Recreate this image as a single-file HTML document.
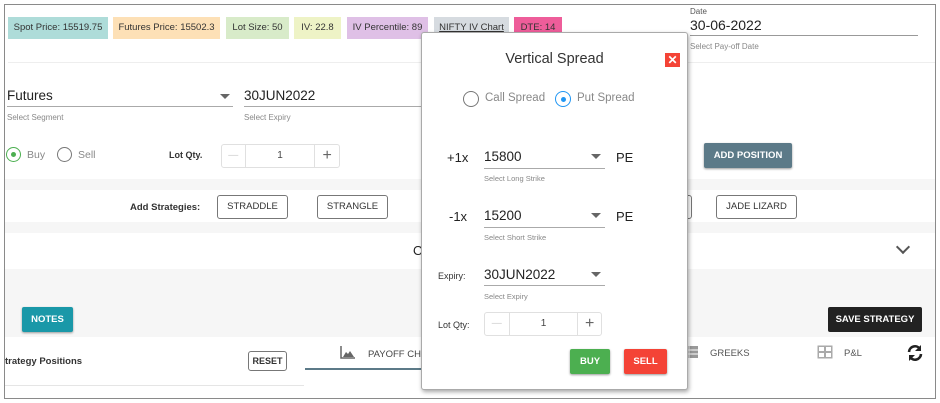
<!DOCTYPE html>
<html><head><meta charset="utf-8"><style>
*{box-sizing:border-box;margin:0;padding:0}
body{width:940px;height:403px;background:#fff;font-family:"Liberation Sans",Arial,sans-serif;position:relative;overflow:hidden;color:#222}
.a{position:absolute}
.frame{left:4px;top:4px;width:932px;height:395px;border:1px solid #8a8a8a}
.chip{position:absolute;top:17px;height:22px;font-size:9.5px;line-height:22px;text-align:center;color:#333}
.lbl{font-size:8px;color:#888}
.btn{position:absolute;border:1px solid #777;border-radius:3px;font-size:9.5px;text-align:center;background:#fff;color:#333}
.radio{position:absolute;width:15px;height:15px;border:1.5px solid #777;border-radius:50%}
.qty{position:absolute;border:1px solid #e0e0e0;border-radius:3px;height:24px;display:flex;font-size:10px;color:#444}
.qty div{text-align:center;line-height:22px}
.b{font-weight:bold}
</style></head><body>
<div class="a frame"></div>
<div class="chip" style="left:8px;width:100px;background:#aedcd9">Spot Price: 15519.75</div>
<div class="chip" style="left:113px;width:107px;background:#fde0b6">Futures Price: 15502.3</div>
<div class="chip" style="left:226px;width:63px;background:#d8ebc9">Lot Size: 50</div>
<div class="chip" style="left:294px;width:47px;background:#eef3c6">IV: 22.8</div>
<div class="chip" style="left:347px;width:81px;background:#dfc0e6">IV Percentile: 89</div>
<div class="chip" style="left:434px;width:75px;background:#d6dbe0;text-decoration:underline">NIFTY IV Chart</div>
<div class="chip" style="left:514px;width:48px;background:#ee5d9a">DTE: 14</div>
<div class="a" style="left:690px;top:7px;font-size:8px;color:#555">Date</div>
<div class="a" style="left:690px;top:17px;font-size:14px;color:#222">30-06-2022</div>
<div class="a" style="left:690px;top:35px;width:228px;border-top:1px solid #999"></div>
<div class="a lbl" style="left:690px;top:42px">Select Pay-off Date</div>
<div class="a" style="left:8px;top:62px;width:927px;border-top:1px solid #eee"></div>
<div class="a" style="left:7px;top:88px;font-size:13.5px">Futures</div>
<div class="a" style="left:220px;top:94px;border:5px solid transparent;border-top:5px solid #666"></div>
<div class="a" style="left:7px;top:106px;width:226px;border-top:1px solid #aaa"></div>
<div class="a lbl" style="left:7px;top:113px">Select Segment</div>
<div class="a" style="left:244px;top:88px;font-size:13.5px">30JUN2022</div>
<div class="a" style="left:244px;top:106px;width:180px;border-top:1px solid #aaa"></div>
<div class="a lbl" style="left:244px;top:113px">Select Expiry</div>
<div class="radio" style="left:6px;top:147px;border-color:#4caf50"></div>
<div class="a" style="left:11px;top:152px;width:5px;height:5px;border-radius:50%;background:#4caf50"></div>
<div class="a" style="left:27px;top:149px;font-size:10.5px;color:#888">Buy</div>
<div class="radio" style="left:57px;top:147px"></div>
<div class="a" style="left:78px;top:149px;font-size:10.5px;color:#888">Sell</div>
<div class="a b" style="left:169px;top:150px;font-size:9px;color:#333">Lot Qty.</div>
<div class="qty" style="left:221px;top:144px;width:119px"><div style="width:24px;border-right:1px solid #e0e0e0;color:#ccc">—</div><div style="width:71px;border-right:1px solid #e0e0e0">1</div><div style="width:24px;font-size:16px;color:#666">+</div></div>
<div class="a b" style="left:704px;top:143px;width:88px;height:25px;background:#5c7a88;color:#fff;font-size:9.5px;line-height:25px;text-align:center;border-radius:2px;box-shadow:0 1px 2px #999">ADD POSITION</div>
<div class="a" style="left:5px;top:179px;width:930px;height:11px;background:#f6f6f6"></div>
<div class="a b" style="left:130px;top:202px;font-size:9.5px;color:#333">Add Strategies:</div>
<div class="btn" style="left:217px;top:195px;width:71px;height:24px;line-height:22px">STRADDLE</div>
<div class="btn" style="left:317px;top:195px;width:71px;height:24px;line-height:22px">STRANGLE</div>
<div class="btn" style="left:650px;top:195px;width:42px;height:24px;line-height:22px">R</div>
<div class="btn" style="left:716px;top:195px;width:81px;height:24px;line-height:22px">JADE LIZARD</div>
<div class="a" style="left:5px;top:222px;width:930px;height:11px;background:#f6f6f6"></div>
<div class="a" style="left:413px;top:243px;font-size:13px">O</div>
<div class="a" style="left:898px;top:242px;width:10px;height:10px;border-right:2px solid #555;border-bottom:2px solid #555;transform:rotate(45deg)"></div>
<div class="a" style="left:5px;top:269px;width:930px;height:68px;background:#f6f6f6"></div>
<div class="a b" style="left:22px;top:307px;width:51px;height:25px;background:#1a98a8;color:#fff;font-size:9.5px;line-height:25px;text-align:center;border-radius:2px;box-shadow:0 1px 2px #999">NOTES</div>
<div class="a b" style="left:828px;top:307px;width:94px;height:25px;background:#222;color:#fff;font-size:9.5px;line-height:25px;text-align:center;border-radius:2px">SAVE STRATEGY</div>
<div class="a b" style="left:5px;top:356px;font-size:9.5px;color:#333">trategy Positions</div>
<div class="btn b" style="left:248px;top:351px;width:39px;height:20px;line-height:18px;font-size:9px">RESET</div>
<div class="a" style="left:5px;top:385px;width:299px;border-top:1px solid #e5e5e5"></div>
<svg class="a" style="left:340px;top:345px" width="16" height="14"><path d="M1 1V13H15" stroke="#666" stroke-width="1.5" fill="none"/><path d="M3 12L6 7L8 9L10 6L14 12Z" fill="#666"/></svg>
<div class="a" style="left:368px;top:349px;font-size:9.5px;color:#444">PAYOFF CHA</div>
<div class="a" style="left:305px;top:368px;width:120px;border-top:2px solid #5c7a88"></div>
<svg class="a" style="left:686px;top:346px" width="12" height="12"><rect x="0" y="0" width="12" height="12" fill="#999"/><path d="M0 4H12M0 8H12M3 0V12" stroke="#fff"/></svg>
<div class="a" style="left:710px;top:348px;font-size:9.5px;color:#555">GREEKS</div>
<svg class="a" style="left:817px;top:345px" width="16" height="14"><rect x="0.5" y="0.5" width="15" height="13" fill="#aaa"/><rect x="2" y="2" width="5" height="4" fill="#fff"/><rect x="9" y="2" width="5" height="4" fill="#fff"/><rect x="2" y="8" width="5" height="4" fill="#fff"/><rect x="9" y="8" width="5" height="4" fill="#fff"/></svg>
<div class="a" style="left:844px;top:348px;font-size:9.5px;color:#555">P&amp;L</div>
<svg class="a" style="left:906px;top:344px" width="18" height="18" viewBox="0 0 18 18"><path d="M3 8A6 6 0 0 1 14 5" stroke="#222" stroke-width="2.6" fill="none"/><path d="M15 1V7H9Z" fill="#222"/><path d="M15 10A6 6 0 0 1 4 13" stroke="#222" stroke-width="2.6" fill="none"/><path d="M3 17V11H9Z" fill="#222"/></svg>

<div class="a" style="left:421px;top:32px;width:267px;height:358px;background:#fff;border:1px solid #aaa;border-radius:3px;box-shadow:1px 2px 4px rgba(0,0,0,.35)"></div>
<div class="a" style="left:421px;top:51px;width:267px;text-align:center;font-size:14.5px;color:#333">Vertical Spread</div>
<div class="a" style="left:665px;top:53px;width:15px;height:14px;background:#f44336;color:#fff;font-size:12px;line-height:14px;text-align:center;font-weight:bold">✕</div>
<div class="radio" style="left:463px;top:91px;width:16px;height:16px"></div>
<div class="a" style="left:485px;top:92px;font-size:11.5px;color:#888">Call Spread</div>
<div class="radio" style="left:555px;top:91px;width:16px;height:16px;border-color:#2196f3"></div>
<div class="a" style="left:561px;top:97px;width:5px;height:5px;border-radius:50%;background:#2196f3"></div>
<div class="a" style="left:577px;top:92px;font-size:11.5px;color:#888">Put Spread</div>
<div class="a" style="left:447px;top:150px;font-size:13px">+1x</div>
<div class="a" style="left:484px;top:149px;font-size:13.5px">15800</div>
<div class="a" style="left:591px;top:154px;border:5px solid transparent;border-top:5px solid #666"></div>
<div class="a" style="left:484px;top:168px;width:121px;border-top:1px solid #aaa"></div>
<div class="a lbl" style="left:484px;top:174px;font-size:7.5px">Select Long Strike</div>
<div class="a" style="left:616px;top:150px;font-size:13px">PE</div>
<div class="a" style="left:449px;top:209px;font-size:13px">-1x</div>
<div class="a" style="left:484px;top:208px;font-size:13.5px">15200</div>
<div class="a" style="left:591px;top:213px;border:5px solid transparent;border-top:5px solid #666"></div>
<div class="a" style="left:484px;top:227px;width:121px;border-top:1px solid #aaa"></div>
<div class="a lbl" style="left:484px;top:233px;font-size:7.5px">Select Short Strike</div>
<div class="a" style="left:616px;top:209px;font-size:13px">PE</div>
<div class="a" style="left:438px;top:271px;font-size:9px;color:#333">Expiry:</div>
<div class="a" style="left:484px;top:267px;font-size:13.5px">30JUN2022</div>
<div class="a" style="left:591px;top:272px;border:5px solid transparent;border-top:5px solid #666"></div>
<div class="a" style="left:484px;top:285px;width:121px;border-top:1px solid #aaa"></div>
<div class="a lbl" style="left:484px;top:292px;font-size:7.5px">Select Expiry</div>
<div class="a" style="left:438px;top:320px;font-size:9px;color:#333">Lot Qty:</div>
<div class="qty" style="left:484px;top:312px;width:118px"><div style="width:25px;border-right:1px solid #e0e0e0;color:#ccc">—</div><div style="width:70px;border-right:1px solid #e0e0e0">1</div><div style="width:23px;font-size:16px;color:#666">+</div></div>
<div class="a" style="left:570px;top:349px;width:40px;height:25px;background:#4caf50;color:#fff;font-size:9.5px;font-weight:bold;line-height:25px;text-align:center;border-radius:2px;box-shadow:0 1px 2px #999">BUY</div>
<div class="a" style="left:624px;top:349px;width:43px;height:25px;background:#f44336;color:#fff;font-size:9.5px;font-weight:bold;line-height:25px;text-align:center;border-radius:2px;box-shadow:0 1px 2px #999">SELL</div>
</body></html>
